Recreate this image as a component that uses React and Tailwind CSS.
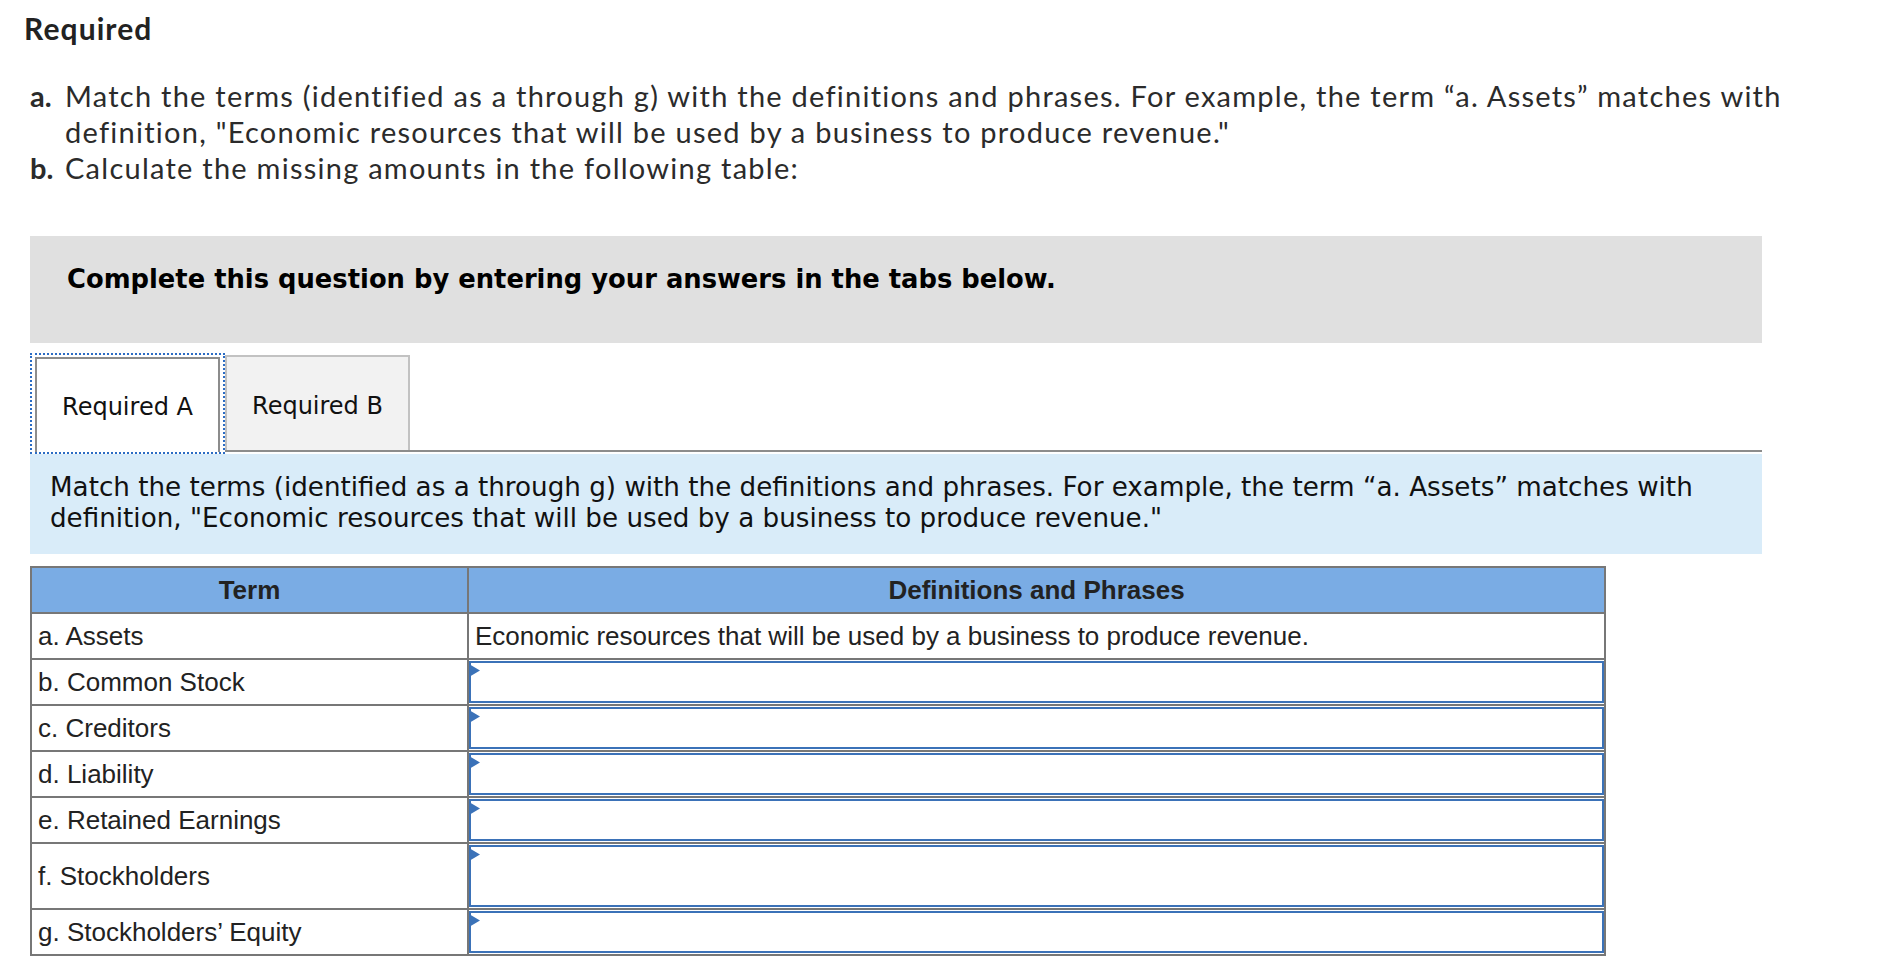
import React from 'react';

const terms = [
  { term: 'a. Assets', def: 'Economic resources that will be used by a business to produce revenue.' },
  { term: 'b. Common Stock' },
  { term: 'c. Creditors' },
  { term: 'd. Liability' },
  { term: 'e. Retained Earnings' },
  { term: 'f. Stockholders', tall: true },
  { term: 'g. Stockholders’ Equity' },
];

const Marker = () => (
  <svg className="absolute left-[-2px] top-[1px]" width="11" height="13" viewBox="0 0 11 13">
    <polygon points="0,0 11,6.5 0,13" fill="#3b72b8" />
  </svg>
);

const App = () => {
  return (
    <div className="min-h-screen bg-white text-[#1a1a1a]">
      {/* heading + task list run wider than the panels below */}
      <div className="pl-[30px] pr-[40px] pt-[10px]">
        <h2 className="ml-[-6px] font-['Lato',sans-serif] text-[30px] font-bold leading-[36px] tracking-[1.1px] text-[#222]">
          Required
        </h2>

        <div className="mt-[32px] font-['Lato',sans-serif] text-[29px] leading-[36px] tracking-[1.25px] text-[#2b2b2b]">
          <div className="flex">
            <span className="w-[35px] shrink-0 font-bold tracking-normal">a.</span>
            <span>
              Match the terms (identified as a through g) with the definitions and phrases. For example, the term “a. Assets” matches with definition, "Economic resources that will be used by a business to produce revenue."
            </span>
          </div>
          <div className="flex">
            <span className="w-[35px] shrink-0 font-bold tracking-normal">b.</span>
            <span>Calculate the missing amounts in the following table:</span>
          </div>
        </div>
      </div>

      <div className="pl-[30px] pr-[116px]">
        {/* instructions bar */}
        <div className="mt-[50px] h-[107px] bg-[#e0e0e0] pl-[37px] pt-[28px]">
          <p className="font-['DejaVu_Sans',sans-serif] text-[25.8px] font-bold leading-[30px] text-black">
            Complete this question by entering your answers in the tabs below.
          </p>
        </div>

        {/* tabs */}
        <div className="mt-[10px] flex items-end">
          <div className="border-2 border-dotted border-[#2b6cc4] px-[3px] pt-[2px]">
            <div className="flex h-[95px] w-[185px] items-center justify-center border-2 border-b-0 border-[#8c8c8c] bg-white pt-[2px] font-['DejaVu_Sans',sans-serif] text-[24px] text-[#111]">
              Required A
            </div>
          </div>
          <div className="mb-[2px] flex flex-1 items-end border-b-2 border-[#8c8c8c]">
            <div className="flex h-[95px] w-[185px] items-center justify-center border-2 border-b-0 border-[#c2c2c2] bg-[#f2f2f2] pt-[4px] font-['DejaVu_Sans',sans-serif] text-[24px] text-[#111]">
              Required B
            </div>
          </div>
        </div>

        <div className="bg-[#d9ecf9] px-[20px] pb-[20px] pt-[18px] font-['DejaVu_Sans',sans-serif] text-[26.2px] leading-[31px] text-[#111]">
          Match the terms (identified as a through g) with the definitions and phrases. For example, the term “a. Assets” matches with definition, "Economic resources that will be used by a business to produce revenue."
        </div>

        {/* matching table */}
        <table className="mt-[12px] w-[1576px] border-collapse font-['Liberation_Sans',Arial,sans-serif] text-[26px] text-[#222]">
          <thead>
            <tr className="h-[46px] bg-[#7aace4]">
              <th className="w-[437px] border-2 border-[#777] font-bold">Term</th>
              <th className="border-2 border-[#777] font-bold">Definitions and Phrases</th>
            </tr>
          </thead>
          <tbody>
            {terms.map((row) => (
              <tr key={row.term} className={row.tall ? 'h-[66px]' : 'h-[46px]'}>
                <td className="border-2 border-[#777] px-[6px]">{row.term}</td>
                {row.def ? (
                  <td className="border-2 border-[#777] px-[6px]">{row.def}</td>
                ) : (
                  <td className="h-[1px] border-2 border-[#777] p-0">
                    <div className={`relative w-full border-2 border-[#3b72b8] bg-white ${row.tall ? 'h-[62px]' : 'h-[42px]'}`}>
                      <Marker />
                    </div>
                  </td>
                )}
              </tr>
            ))}
          </tbody>
        </table>
      </div>
    </div>
  );
};

export default App;
